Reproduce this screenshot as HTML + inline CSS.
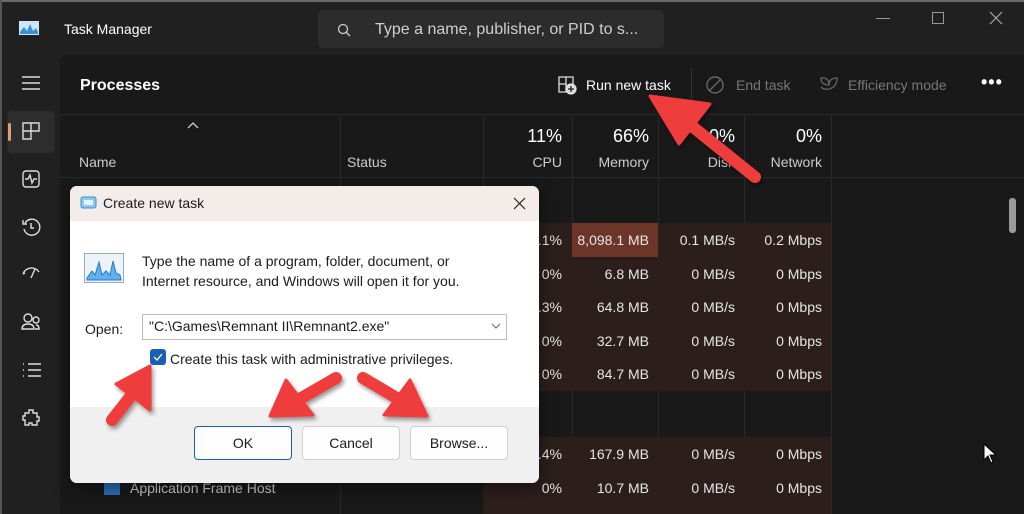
<!DOCTYPE html>
<html><head><meta charset="utf-8"><style>
*{box-sizing:border-box;margin:0;padding:0}
body{width:1024px;height:514px;overflow:hidden;background:#202020;font-family:"Liberation Sans",sans-serif;position:relative;color:#fff}
.a{position:absolute}
.pane{left:60px;top:55px;width:964px;height:459px;background:#191919;border-radius:8px 0 0 0}
.t{position:absolute;font-size:14px;white-space:nowrap}
.r{text-align:right}
.row{position:absolute;left:483px;width:348px;height:34px;background:#2c1f1b}
.cell{position:absolute;font-size:14px;color:#e6e6e6;text-align:right;white-space:nowrap}
.vl{position:absolute;width:1px;background:#2a2a2a;top:115px;height:399px}
.btn{position:absolute;top:426px;height:34px;width:98px;background:#fdfdfd;border:1px solid #d0d0d0;border-radius:4px;color:#1b1b1b;font-size:14px;text-align:center;line-height:32px}
</style></head><body>
<div class="a" style="left:0;top:0;width:1024px;height:2px;background:#6a6a6a"></div>
<div class="a" style="left:0;top:0;width:2px;height:514px;background:#555"></div>
<svg class="a" style="left:19px;top:21px" width="20" height="14"><rect width="20" height="14" fill="#cfe6f8"/><path d="M1 11 L5 6 L8 10 L11 3 L14 10 L17 7 L19 11 L19 13 L1 13Z" fill="#3a8fd6"/></svg>
<div class="t" style="left:64px;top:21px;font-size:14px;color:#fff">Task Manager</div>
<div class="a" style="left:318px;top:10px;width:346px;height:38px;background:#2c2c2c;border-radius:5px"></div>
<svg class="a" style="left:337px;top:23px" width="14" height="14"><circle cx="6" cy="6" r="4.5" stroke="#ccc" stroke-width="1.3" fill="none"/><path d="M9.5 9.5L13 13" stroke="#ccc" stroke-width="1.4"/></svg>
<div class="t" style="left:375px;top:21px;font-size:16px;color:#cfcfcf">Type a name, publisher, or PID to s...</div>
<div class="a" style="left:876px;top:18px;width:14px;height:1px;background:#999"></div>
<div class="a" style="left:932px;top:12px;width:12px;height:12px;border:1px solid #999"></div>
<svg class="a" style="left:989px;top:11px" width="14" height="14"><path d="M1 1L13 13M13 1L1 13" stroke="#aaa" stroke-width="1.2"/></svg>
<svg class="a" style="left:22px;top:76px" width="18" height="14"><path d="M0 1H18M0 7H18M0 13H18" stroke="#ddd" stroke-width="1.4"/></svg>
<div class="a" style="left:7px;top:111px;width:48px;height:42px;background:#2d2d2d;border-radius:5px"></div>
<div class="a" style="left:8px;top:123px;width:3px;height:18px;background:#e0a080;border-radius:2px"></div>
<svg class="a" style="left:22px;top:122px" width="18" height="18" fill="none" stroke="#ddd" stroke-width="1.4"><path d="M1 1H9V17H1ZM1 9H9M9 1H17V9H9"/></svg>
<svg class="a" style="left:22px;top:170px" width="18" height="18" fill="none" stroke="#ddd" stroke-width="1.4"><rect x="1" y="1" width="16" height="16" rx="3"/><path d="M3 9H6L8 5L10 13L12 9H15"/></svg>
<svg class="a" style="left:21px;top:217px" width="20" height="20" fill="none" stroke="#ddd" stroke-width="1.4"><path d="M4 6A8 8 0 1 1 3 12M2 3V7H6M10 6V11H13"/></svg>
<svg class="a" style="left:21px;top:264px" width="20" height="16" fill="none" stroke="#ddd" stroke-width="1.4"><path d="M2 10A9 9 0 0 1 18 8M10 14L14 5M2 10L4 9"/></svg>
<svg class="a" style="left:21px;top:312px" width="20" height="20" fill="none" stroke="#ddd" stroke-width="1.4"><circle cx="7" cy="6" r="4"/><circle cx="15" cy="8" r="3"/><path d="M1 17Q1 12 7 12Q13 12 13 17ZM14 17H18Q18 13 15 13"/></svg>
<svg class="a" style="left:22px;top:362px" width="20" height="16" fill="none" stroke="#ddd" stroke-width="1.6"><path d="M1 2H2M6 2H19M1 8H2M6 8H19M1 14H2M6 14H19"/></svg>
<svg class="a" style="left:21px;top:408px" width="20" height="20" fill="none" stroke="#ddd" stroke-width="1.4"><path d="M8 2H12V5H16V9H18V13H16V17H11V15H8V17H4V12H2V8H4V5H8Z"/></svg>
<div class="a pane"></div>
<div class="t" style="left:80px;top:77px;font-size:16px;font-weight:bold">Processes</div>
<svg class="a" style="left:558px;top:76px" width="20" height="20" fill="none" stroke="#ddd" stroke-width="1.3"><path d="M1 1H8V16H1ZM1 8H8M8 1H15V8"/><circle cx="13" cy="13" r="5" fill="#ddd"/><path d="M13 10V16M10 13H16" stroke="#191919"/></svg>
<div class="t" style="left:586px;top:77px;color:#fff">Run new task</div>
<div class="a" style="left:691px;top:68px;width:1px;height:34px;background:#333"></div>
<svg class="a" style="left:706px;top:76px" width="18" height="18" fill="none" stroke="#666" stroke-width="1.4"><circle cx="9" cy="9" r="8"/><path d="M3 15L15 3"/></svg>
<div class="t" style="left:736px;top:77px;color:#777">End task</div>
<svg class="a" style="left:818px;top:75px" width="22" height="20" fill="none" stroke="#666" stroke-width="1.3"><path d="M3 3Q11 2 11 10Q3 10 3 3ZM11 10Q11 3 19 3Q19 12 11 14Q6 15 3 12"/></svg>
<div class="t" style="left:848px;top:77px;color:#777">Efficiency mode</div>
<div class="t" style="left:981px;top:72px;font-size:18px;letter-spacing:1px;font-weight:bold">•••</div>
<div class="a" style="left:60px;top:114px;width:964px;height:1px;background:#2a2a2a"></div>
<div class="a" style="left:60px;top:177px;width:964px;height:1px;background:#2a2a2a"></div>
<div class="vl" style="left:340px"></div><div class="vl" style="left:483px"></div><div class="vl" style="left:572px"></div><div class="vl" style="left:658px"></div><div class="vl" style="left:744px"></div><div class="vl" style="left:831px"></div>
<svg class="a" style="left:187px;top:121px" width="12" height="8" fill="none" stroke="#ccc" stroke-width="1.3"><path d="M1 7L6 2L11 7"/></svg>
<div class="t" style="left:79px;top:154px;color:#ccc">Name</div>
<div class="t" style="left:347px;top:154px;color:#ccc">Status</div>
<div class="t r" style="left:483px;width:79px;top:126px;font-size:18px">11%</div>
<div class="t r" style="left:483px;width:79px;top:154px;color:#ccc">CPU</div>
<div class="t r" style="left:572px;width:77px;top:126px;font-size:18px">66%</div>
<div class="t r" style="left:572px;width:77px;top:154px;color:#ccc">Memory</div>
<div class="t r" style="left:658px;width:77px;top:126px;font-size:18px">0%</div>
<div class="t r" style="left:658px;width:77px;top:154px;color:#ccc">Disk</div>
<div class="t r" style="left:744px;width:78px;top:126px;font-size:18px">0%</div>
<div class="t r" style="left:744px;width:78px;top:154px;color:#ccc">Network</div>
<div class="row" style="top:223px"></div><div class="a" style="left:572px;top:223px;width:86px;height:34px;background:#6b3628"></div>
<div class="row" style="top:257px"></div><div class="row" style="top:290px"></div><div class="row" style="top:323px"></div><div class="row" style="top:357px"></div>
<div class="row" style="top:437px"></div><div class="row" style="top:471px;height:43px"></div>
<div class="cell" style="left:483px;width:79px;top:232px">1.1%</div><div class="cell" style="left:572px;width:77px;top:232px">8,098.1 MB</div><div class="cell" style="left:658px;width:77px;top:232px">0.1 MB/s</div><div class="cell" style="left:744px;width:78px;top:232px">0.2 Mbps</div>
<div class="cell" style="left:483px;width:79px;top:266px">0%</div><div class="cell" style="left:572px;width:77px;top:266px">6.8 MB</div><div class="cell" style="left:658px;width:77px;top:266px">0 MB/s</div><div class="cell" style="left:744px;width:78px;top:266px">0 Mbps</div>
<div class="cell" style="left:483px;width:79px;top:299px">1.3%</div><div class="cell" style="left:572px;width:77px;top:299px">64.8 MB</div><div class="cell" style="left:658px;width:77px;top:299px">0 MB/s</div><div class="cell" style="left:744px;width:78px;top:299px">0 Mbps</div>
<div class="cell" style="left:483px;width:79px;top:333px">0%</div><div class="cell" style="left:572px;width:77px;top:333px">32.7 MB</div><div class="cell" style="left:658px;width:77px;top:333px">0 MB/s</div><div class="cell" style="left:744px;width:78px;top:333px">0 Mbps</div>
<div class="cell" style="left:483px;width:79px;top:366px">0%</div><div class="cell" style="left:572px;width:77px;top:366px">84.7 MB</div><div class="cell" style="left:658px;width:77px;top:366px">0 MB/s</div><div class="cell" style="left:744px;width:78px;top:366px">0 Mbps</div>
<div class="cell" style="left:483px;width:79px;top:446px">1.4%</div><div class="cell" style="left:572px;width:77px;top:446px">167.9 MB</div><div class="cell" style="left:658px;width:77px;top:446px">0 MB/s</div><div class="cell" style="left:744px;width:78px;top:446px">0 Mbps</div>
<div class="cell" style="left:483px;width:79px;top:480px">0%</div><div class="cell" style="left:572px;width:77px;top:480px">10.7 MB</div><div class="cell" style="left:658px;width:77px;top:480px">0 MB/s</div><div class="cell" style="left:744px;width:78px;top:480px">0 Mbps</div>
<div class="a" style="left:104px;top:483px;width:16px;height:12px;background:#2c6fb8"></div>
<div class="t" style="left:130px;top:480px;color:#ccc">Application Frame Host</div>
<div class="a" style="left:1009px;top:198px;width:7px;height:35px;background:#9a9a9a;border-radius:3px"></div>
<svg class="a" style="left:982px;top:443px" width="16" height="22"><path d="M2 1V17L6 13L9 20L11 19L8 12H14Z" fill="#fff" stroke="#000" stroke-width="1"/></svg>
<div class="a" style="left:70px;top:186px;width:469px;height:297px;background:#fff;border-radius:7px;overflow:hidden;box-shadow:0 4px 16px rgba(0,0,0,.5)">
 <div class="a" style="left:0;top:0;width:469px;height:35px;background:#f3ece9"></div>
 <div class="a" style="left:0;top:221px;width:469px;height:76px;background:#f0f0f0"></div>
</div>
<svg class="a" style="left:80px;top:196px" width="17" height="13"><rect x="1" y="1" width="15" height="11" rx="2" fill="#8fc8ee" stroke="#3a8fd6"/><rect x="4" y="4" width="9" height="5" fill="#e8f4fc"/></svg>
<div class="t" style="left:103px;top:195px;color:#1b1b1b">Create new task</div>
<svg class="a" style="left:513px;top:197px" width="13" height="13"><path d="M1 1L12 12M12 1L1 12" stroke="#222" stroke-width="1.2"/></svg>
<svg class="a" style="left:84px;top:253px" width="40" height="30"><rect x=".5" y=".5" width="39" height="29" fill="#eef3f8" stroke="#9aaab8"/><path d="M3 25L8 18L11 22L15 9L18 22L22 18L26 22L29 8L32 20L36 22L37 27L3 27Z" fill="#5fb0ee" stroke="#2a78c4"/></svg>
<div class="t" style="left:142px;top:251px;color:#1b1b1b;line-height:20px">Type the name of a program, folder, document, or<br>Internet resource, and Windows will open it for you.</div>
<div class="t" style="left:85px;top:321px;color:#1b1b1b">Open:</div>
<div class="a" style="left:142px;top:314px;width:365px;height:26px;border:1px solid #bcbcbc;background:#fff"></div>
<div class="t" style="left:149px;top:318px;color:#1b1b1b">"C:\Games\Remnant II\Remnant2.exe"</div>
<svg class="a" style="left:491px;top:323px" width="10" height="6"><path d="M1 1L5 5L9 1" stroke="#666" fill="none"/></svg>
<div class="a" style="left:150px;top:349px;width:16px;height:16px;background:#1a5fb4;border-radius:3px"></div>
<svg class="a" style="left:152px;top:351px" width="12" height="12"><path d="M2 6L5 9L10 3" stroke="#fff" stroke-width="1.3" fill="none"/></svg>
<div class="t" style="left:170px;top:351px;color:#1b1b1b">Create this task with administrative privileges.</div>
<div class="btn" style="left:194px;border:1px solid #1a5fb4">OK</div>
<div class="btn" style="left:302px">Cancel</div>
<div class="btn" style="left:410px">Browse...</div>
<svg class="a" style="left:0;top:0" width="1024" height="514">
<defs><filter id="s" x="-20%" y="-20%" width="140%" height="140%"><feDropShadow dx="2" dy="3" stdDeviation="2" flood-color="#000" flood-opacity=".4"/></filter></defs>
<g fill="#ef3c3c" stroke="#ef3c3c" stroke-linejoin="round" filter="url(#s)">
<path d="M755 177 L688 123" stroke-width="12" stroke-linecap="round" fill="none"/>
<path d="M650 96 L710 104 L679 144Z" stroke-width="3"/>
<path d="M112 420 L134 392" stroke-width="12" stroke-linecap="round" fill="none"/>
<path d="M150 366 L150 410 L116 384Z" stroke-width="3"/>
<path d="M336 378 L298 400" stroke-width="12" stroke-linecap="round" fill="none"/>
<path d="M270 416 L286 380 L313 415Z" stroke-width="3"/>
<path d="M363 378 L400 400" stroke-width="12" stroke-linecap="round" fill="none"/>
<path d="M427 416 L384 415 L410 380Z" stroke-width="3"/>
</g></svg>
</body></html>
